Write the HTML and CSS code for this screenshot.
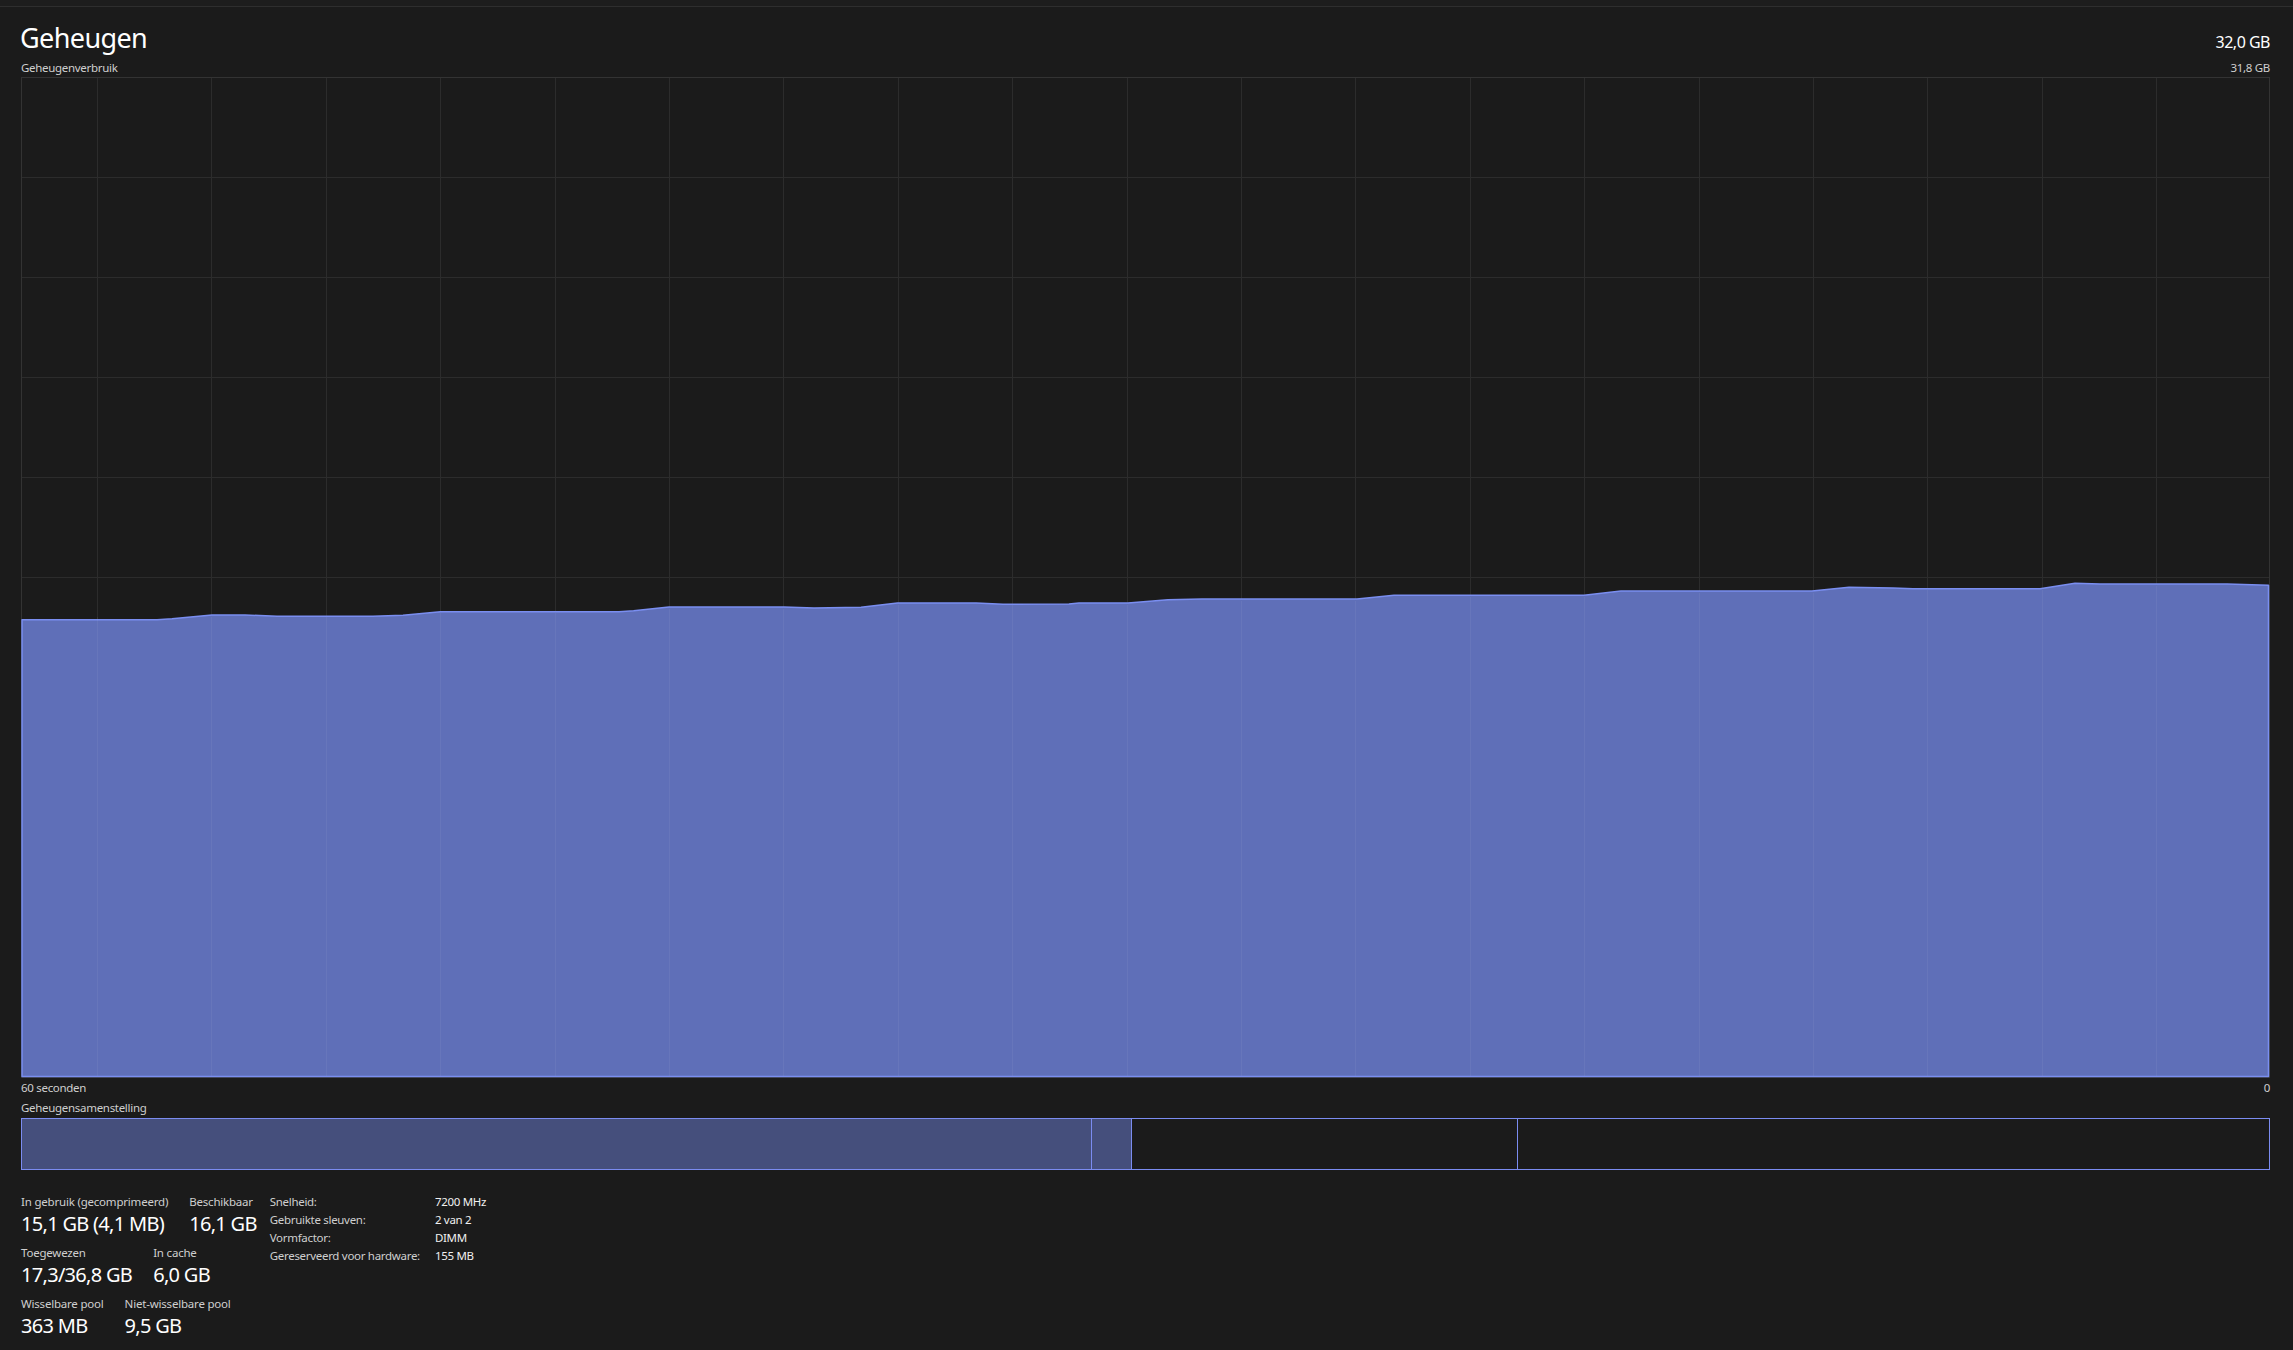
FILE: index.html
```html
<!DOCTYPE html>
<html lang="nl">
<head>
    <meta charset="UTF-8">
    <title>Geheugen</title>
    <link rel="stylesheet" href="styles.css">
</head>
<body>
    <div class="topline"></div>
    <div class="page">
        <div class="header">
            <h1 class="title">Geheugen</h1>
            <span class="total">32,0 GB</span>
        </div>
        <div class="subheader">
            <span>Geheugenverbruik</span>
            <span>31,8 GB</span>
        </div>

        <!-- usage graph, 60 seconds -->
        <svg class="chart" width="2249" height="1001" viewBox="0 0 2249 1001">
            <rect x="0.5" y="0.5" width="2248" height="1000" fill="none" stroke="#333333"/>
            <path class="grid" d="M1 100.5H2248M1 200.5H2248M1 300.5H2248M1 400.5H2248M1 500.5H2248M1 600.5H2248M1 700.5H2248M1 800.5H2248M1 900.5H2248
                M76.5 1V1000M190.5 1V1000M305.5 1V1000M419.5 1V1000M534.5 1V1000M648.5 1V1000M762.5 1V1000M877.5 1V1000M991.5 1V1000M1106.5 1V1000
                M1220.5 1V1000M1334.5 1V1000M1449.5 1V1000M1563.5 1V1000M1678.5 1V1000M1792.5 1V1000M1906.5 1V1000M2021.5 1V1000M2135.5 1V1000"/>
            <polygon class="usage" points="1,542.7 136,542.7 151,541.7 191,538 224,538 256,539.3 352,539.3 382,538.3 419.6,534.7 598,534.7 612.6,533.7 648,530 763,530 793,531 840,530.3 876.5,526 955,526 982,527.3 1048,527 1058,526 1107,526 1147,522.7 1181,522 1336,522 1373,518.3 1563,518.3 1600,514 1791,514 1828,510.3 1872,511 1892,511.7 2019,511.7 2054,506.3 2079,507 2206,507 2247.5,508.3 2247.5,999.5 1,999.5"/>
            <path class="grid-over" d="M76.5 540V999M190.5 540V999M305.5 540V999M419.5 536V999M534.5 536V999M648.5 532V999M762.5 532V999M877.5 528V999M991.5 528V999M1106.5 528V999
                M1220.5 524V999M1334.5 524V999M1449.5 520V999M1563.5 520V999M1678.5 516V999M1792.5 516V999M1906.5 513V999M2021.5 513V999M2135.5 509V999"/>
        </svg>

        <div class="axis">
            <span>60 seconden</span>
            <span>0</span>
        </div>
        <div class="caption">Geheugensamenstelling</div>

        <div class="composition">
            <div class="seg seg-used"></div>
            <div class="seg seg-modified"></div>
            <div class="seg seg-standby"></div>
            <div class="seg seg-free"></div>
        </div>

        <div class="stats">
            <div class="stats-left">
                <div class="stat-row">
                    <div class="stat">
                        <span class="stat-label">In gebruik (gecomprimeerd)</span>
                        <span class="stat-value">15,1 GB (4,1 MB)</span>
                    </div>
                    <div class="stat">
                        <span class="stat-label">Beschikbaar</span>
                        <span class="stat-value">16,1 GB</span>
                    </div>
                </div>
                <div class="stat-row">
                    <div class="stat">
                        <span class="stat-label">Toegewezen</span>
                        <span class="stat-value">17,3/36,8 GB</span>
                    </div>
                    <div class="stat">
                        <span class="stat-label">In cache</span>
                        <span class="stat-value">6,0 GB</span>
                    </div>
                </div>
                <div class="stat-row">
                    <div class="stat">
                        <span class="stat-label">Wisselbare pool</span>
                        <span class="stat-value">363 MB</span>
                    </div>
                    <div class="stat">
                        <span class="stat-label">Niet-wisselbare pool</span>
                        <span class="stat-value">9,5 GB</span>
                    </div>
                </div>
            </div>
            <table class="details">
                <tr><td class="key">Snelheid:</td><td>7200 MHz</td></tr>
                <tr><td class="key">Gebruikte sleuven:</td><td>2 van 2</td></tr>
                <tr><td class="key">Vormfactor:</td><td>DIMM</td></tr>
                <tr><td class="key">Gereserveerd voor hardware:</td><td>155 MB</td></tr>
            </table>
        </div>
    </div>
</body>
</html>
```

FILE: styles.css
```css
body {
    margin: 0;
    background-color: #1b1b1b;
    color: #ffffff;
    font-family: "Noto Sans", "Open Sans", sans-serif;
}
.topline {
    height: 6px;
    background-color: #1d1d1d;
    border-bottom: 1px solid #2e2e2e;
}
.page {
    padding: 0 23px 0 21px;
}
.header {
    display: flex;
    justify-content: space-between;
    align-items: baseline;
    margin-top: 14px;
}
.title {
    margin: 0 0 0 -1px;
    font-size: 27px;
    font-weight: normal;
    line-height: 34px;
    letter-spacing: -0.6px;
}
.total {
    font-size: 16px;
    letter-spacing: -0.5px;
}
.subheader,
.axis,
.caption {
    font-size: 11.5px;
    line-height: 16px;
    letter-spacing: -0.3px;
    color: #cfcfcf;
}
.subheader,
.axis {
    display: flex;
    justify-content: space-between;
}
.subheader {
    margin-top: 5px;
    margin-bottom: 1px;
}
.chart {
    display: block;
}
.grid {
    stroke: #2c2c2c;
    stroke-width: 1;
    fill: none;
}
.usage {
    fill: #5f6fb8;
    stroke: #7a8ef0;
    stroke-width: 1.5;
    stroke-linejoin: round;
}
.grid-over {
    stroke: rgba(255, 255, 255, 0.05);
    stroke-width: 1;
    fill: none;
}
.axis {
    margin-top: 2px;
}
.caption {
    margin-top: 4px;
}
.composition {
    display: flex;
    height: 50px;
    margin-top: 2px;
    border: 1px solid #7b8cf0;
}
.seg {
    box-sizing: border-box;
    border-right: 1px solid #7b8cf0;
}
.seg-used {
    width: 1070px;
    background-color: #454f7c;
}
.seg-modified {
    width: 40px;
    background-color: #454f7c;
}
.seg-standby {
    width: 386px;
}
.seg-free {
    flex: 1;
    border-right: none;
}
.stats {
    display: flex;
    gap: 13px;
    margin-top: 24px;
}
.stat-row {
    display: flex;
    gap: 21px;
    margin-bottom: 8px;
}
.stat {
    display: flex;
    flex-direction: column;
}
.stat-label {
    font-size: 11.5px;
    line-height: 16px;
    letter-spacing: -0.2px;
    color: #cfcfcf;
}
.stat-value {
    padding-top: 1px;
    font-size: 20px;
    line-height: 26px;
    letter-spacing: -0.7px;
    color: #ffffff;
}
.details {
    border-collapse: collapse;
    margin-top: -1px;
    align-self: flex-start;
    font-size: 11.5px;
    line-height: 18px;
    letter-spacing: -0.3px;
}
.details td {
    padding: 0;
    color: #f0f0f0;
}
.details .key {
    padding-right: 15px;
    color: #cfcfcf;
}
```
